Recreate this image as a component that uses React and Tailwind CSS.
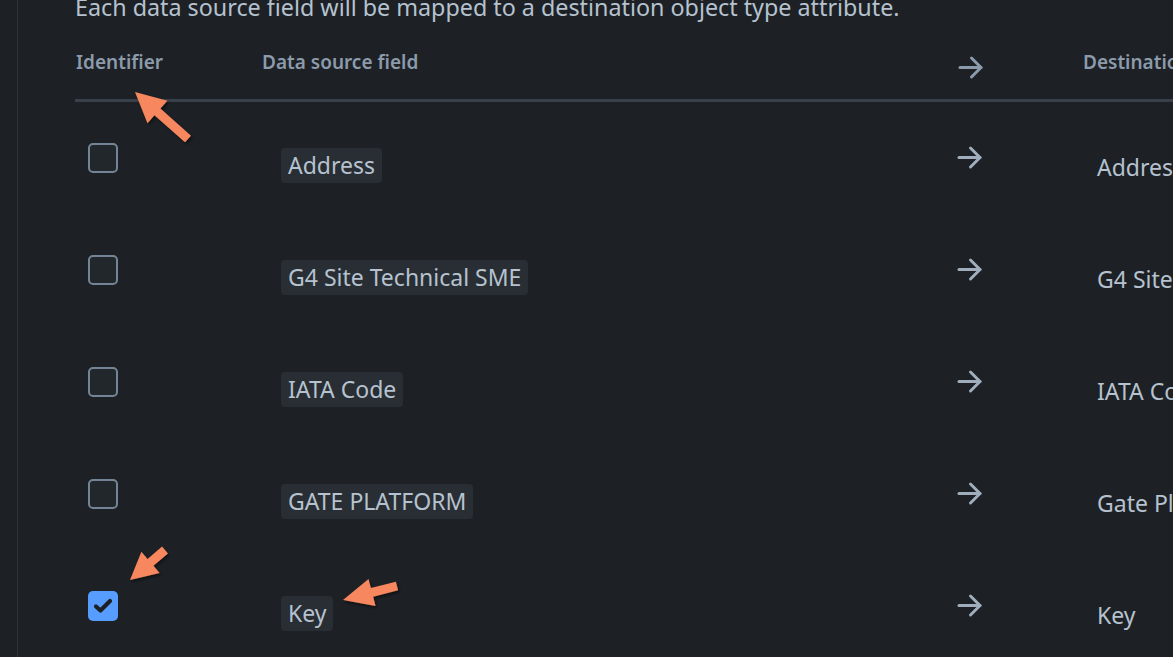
import React from 'react';

const rows = [
  { id: 'address', field: 'Address', dest: 'Address', checked: false },
  { id: 'g4', field: 'G4 Site Technical SME', dest: 'G4 Site Technical SME', checked: false },
  { id: 'iata', field: 'IATA Code', dest: 'IATA Code', checked: false },
  { id: 'gate', field: 'GATE PLATFORM', dest: 'Gate Platform', checked: false },
  { id: 'key', field: 'Key', dest: 'Key', checked: true },
];

const Arrow = () => (
  <svg width="26" height="25" viewBox="0 0 26 25" fill="none" stroke="currentColor" strokeWidth="3" strokeLinecap="round" strokeLinejoin="round">
    <path d="M2 12.5h21" />
    <path d="M13.5 3l9.5 9.5-9.5 9.5" />
  </svg>
);

const Checkbox = ({ checked }) =>
  checked ? (
    <div className="w-[30px] h-[30px] rounded-[5px] bg-[#579dff] flex items-center justify-center">
      <svg width="20" height="16" viewBox="0 0 20 16" fill="none" stroke="#1d2125" strokeWidth="4.2" strokeLinecap="round" strokeLinejoin="round">
        <path d="M3 8.5l4.5 4 9.5-9.5" />
      </svg>
    </div>
  ) : (
    <div className="w-[30px] h-[30px] rounded-[5px] border-2 border-[#738496] bg-[#22272b]" />
  );

// annotation arrow: tip and tail point, returns polygon points
const pointer = (tx, ty, sx, sy, head = 30, hw = 15, sw = 4.5) => {
  const dx = sx - tx;
  const dy = sy - ty;
  const len = Math.hypot(dx, dy);
  const ux = dx / len;
  const uy = dy / len;
  const px = -uy;
  const py = ux;
  const bx = tx + ux * head;
  const by = ty + uy * head;
  const pts = [
    [tx, ty],
    [bx + px * hw, by + py * hw],
    [bx + px * sw, by + py * sw],
    [sx + px * sw, sy + py * sw],
    [sx - px * sw, sy - py * sw],
    [bx - px * sw, by - py * sw],
    [bx - px * hw, by - py * hw],
  ];
  return pts.map((p) => p.join(',')).join(' ');
};

export default function App() {
  return (
    <div
      className="relative w-[1173px] h-[657px] overflow-hidden bg-[#1d2125] text-[#b6c2cf] flex"
      style={{ fontFamily: '"Noto Sans", "Open Sans", sans-serif' }}
    >
      <div className="w-[18px] shrink-0 border-r border-[#2c333a]" />
      <div className="flex-1 pl-[57px] flex flex-col">
        <p className="shrink-0 text-[23.3px] leading-[26px] -mt-[6px] whitespace-nowrap">
          Each data source field will be mapped to a destination object type attribute.
        </p>
        <div className="shrink-0 mt-[28px] h-[54px] flex text-[#8c9bab] text-[19px] font-semibold whitespace-nowrap border-b-[3px] border-[#38414a]">
          <div className="w-[187px] pl-[1px]">Identifier</div>
          <div className="w-[696px]">Data source field</div>
          <div className="w-[125px] pt-[7px] text-[#8c9bab]">
            <Arrow />
          </div>
          <div>Destination object type attribute</div>
        </div>
        {rows.map((r) => (
          <div key={r.id} className="h-[112px] flex shrink-0 whitespace-nowrap">
            <div className="w-[186px] pl-[13px] pt-[41px]">
              <Checkbox checked={r.checked} />
            </div>
            <div className="w-[696px] pl-[20px] pt-[46px]">
              <span className="inline-block h-[35px] leading-[35px] px-[7px] rounded-[4px] bg-[#282e33] text-[23px]">
                {r.field}
              </span>
            </div>
            <div className="w-[126px] pt-[43px] text-[#9fadbc]">
              <Arrow />
            </div>
            <div className="pl-[14px] pt-[48px] h-[35px] leading-[35px] text-[23px]">{r.dest}</div>
          </div>
        ))}
      </div>
      <svg className="absolute inset-0 pointer-events-none" width="1173" height="657">
        <defs>
          <filter id="sh" x="-20%" y="-20%" width="140%" height="140%">
            <feDropShadow dx="1.5" dy="2" stdDeviation="1.5" floodColor="#000" floodOpacity="0.5" />
          </filter>
        </defs>
        <g fill="#f7875f" filter="url(#sh)">
          <polygon points={pointer(135, 92, 188, 139)} />
          <polygon points={pointer(130, 580, 165, 550, 27, 14, 4.5)} />
          <polygon points={pointer(343, 600, 397, 586, 30, 14, 4.5)} />
        </g>
      </svg>
    </div>
  );
}
